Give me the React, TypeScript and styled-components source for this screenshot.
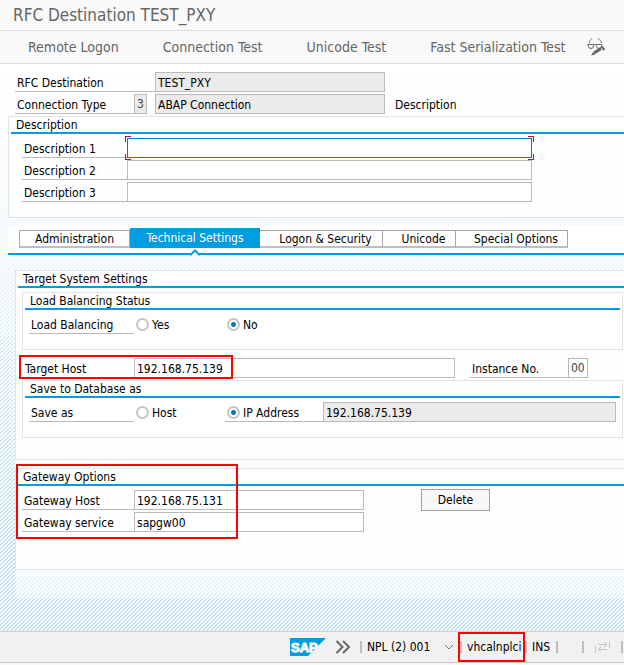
import React from "react";
import styled, { createGlobalStyle, css } from "styled-components";

const accent = "#009de0";
const line = "#bababa";

const GlobalStyle = createGlobalStyle`
  *, *::before, *::after { box-sizing: border-box; }
  body { margin: 0; }
  body, button, input { font: 12px/16px "DejaVu Sans Condensed", "Noto Sans", sans-serif; color: #000; }
  button, input { padding: 0; border-radius: 0; }
`;

const Page = styled.div`
  display: flex;
  flex-direction: column;
  min-height: 100vh;
  overflow: hidden;
`;

const TitleBar = styled.header`
  height: 31px;
  padding-left: 13px;
  background: #f9f9f9;
  border-bottom: 1px solid #dcdcdc;
`;

const Title = styled.h1`
  margin: 0;
  font-size: 17px;
  line-height: 30px;
  font-weight: 400;
  color: #666;
`;

const Toolbar = styled.nav`
  display: flex;
  align-items: center;
  gap: 44px;
  height: 33px;
  padding-left: 28px;
  background: #f9f9f9;
  border-bottom: 1px solid #dcdcdc;
`;

const ToolButton = styled.button`
  border: 0;
  background: none;
  font-size: 14px;
  white-space: nowrap;
  color: #666;
`;

const IconButton = styled.button`
  display: flex;
  border: 0;
  background: none;
  margin-left: -24px;
`;

const Stage = styled.main`
  flex: 1;
  padding: 8px 0 32px 8px;
  background:
    linear-gradient(to bottom, #fff 0, rgba(255, 255, 255, 0.7) 30%, rgba(255, 255, 255, 0) 85%),
    linear-gradient(135deg, #c3e1f1 25%, #fff 25%, #fff 50%, #c3e1f1 50%, #c3e1f1 75%, #fff 75%) 0 0 / 4px 4px;
`;

const Rows = styled.div<{ $inset?: number }>`
  display: flex;
  flex-direction: column;
  gap: 2px;
  padding-left: ${(p) => p.$inset ?? 0}px;
`;

const HeadRows = styled(Rows)`
  margin-bottom: 2px;
`;

const Row = styled.div`
  position: relative;
  display: flex;
  height: 20px;
`;

const underlined = css`
  border-bottom: 1px solid ${line};
`;

const Label = styled.label<{ $width: number; $pad?: number }>`
  flex: none;
  width: ${(p) => p.$width}px;
  padding: 3px 0 0 ${(p) => p.$pad ?? 2}px;
  white-space: nowrap;
  ${underlined}
`;

const Field = styled.input<{ $width: number; $small?: boolean }>`
  flex: 0 1 ${(p) => p.$width}px;
  min-width: 0;
  width: ${(p) => p.$width}px;
  height: 20px;
  padding: 2px 0 0 2px;
  border: 1px solid ${line};
  background: #fff;
  outline: 0;
  &:read-only { background: #ebebeb; }
  ${(p) => p.$small && css`padding: 0 0 0 2px; color: #444;`}
`;

const Gap = styled.span<{ $width: number }>`
  flex: none;
  width: ${(p) => p.$width}px;
`;

const PlainText = styled.span`
  padding-top: 3px;
`;

const FocusFrame = styled.div`
  position: relative;
  display: flex;
  ${Field} { border-color: #0079be; }
`;

const Corner = styled.i<{ $v: "top" | "bottom"; $h: "left" | "right" }>`
  position: absolute;
  width: 6px;
  height: 6px;
  ${(p) => p.$v}: -2px;
  ${(p) => p.$h}: -2px;
  border: 0 solid #e0001b;
  border-${(p) => p.$v}-width: 1px;
  border-${(p) => p.$h}-width: 1px;
`;

const Group = styled.fieldset<{ $closed?: boolean; $bottom: number }>`
  position: relative;
  min-width: 0;
  margin: 0;
  padding: 0 0 ${(p) => p.$bottom}px;
  border: 1px solid #e1e3e5;
  border-right-width: ${(p) => (p.$closed ? 1 : 0)}px;
  background: rgba(255, 255, 255, 0.72);
`;

const GroupTitle = styled.div<{ $closed?: boolean }>`
  height: 17px;
  margin: 0 ${(p) => (p.$closed ? 2 : 0)}px 4px 2px;
  padding-left: 5px;
  background: #fff;
  border-bottom: 2px solid ${accent};
`;

const TabStrip = styled.div`
  display: flex;
  height: 29px;
  margin: 8px 0 15px;
  padding: 2px 0 0 11px;
  background: #fff;
  border-bottom: 2px solid ${accent};
`;

const Tab = styled.button<{ $width: number; $active?: boolean; $shift?: number }>`
  position: relative;
  flex: 0 1 ${(p) => p.$width}px;
  height: 18px;
  margin-top: 2px;
  padding-left: ${(p) => p.$shift ?? 0}px;
  border: 1px solid #a6a6a6;
  border-left-width: 0;
  border-bottom: 2px solid #bfbfbf;
  background: #fff;
  line-height: 16px;
  white-space: nowrap;
  &:first-child { border-left-width: 1px; }
  ${(p) => p.$active && css`
    height: 20px;
    margin-top: 0;
    border: 0;
    background: ${accent};
    color: #fff;
    line-height: 20px;
  `}
`;

const Notch = styled.svg`
  position: absolute;
  left: calc(50% - 5px);
  top: 21px;
`;

const TabPage = styled.div`
  margin-left: 7px;
  padding-bottom: 22px;
  background: rgba(255, 255, 255, 0.5);
`;

const Panels = styled.div`
  display: flex;
  flex-direction: column;
  gap: 8px;
  padding-bottom: 7px;
  background: rgba(255, 255, 255, 0.5);
`;

const Inner = styled.div`
  display: flex;
  flex-direction: column;
  padding: 0 1px 0 6px;
`;

const HostRow = styled(Row)`
  margin: 8px 0 2px;
`;

const RadioLabel = styled.label<{ $width: number; $lined?: boolean }>`
  display: flex;
  flex: none;
  align-items: center;
  gap: 3px;
  width: ${(p) => p.$width}px;
  padding: 2px 0 0 2px;
  border-bottom: 1px solid ${(p) => (p.$lined ? line : "transparent")};
  white-space: nowrap;
`;

const Radio = styled.input.attrs({ type: "radio" })`
  appearance: none;
  width: 13px;
  height: 13px;
  margin: 0;
  border: 2px solid #c6c6c6;
  border-radius: 50%;
  background: #fff;
  &:checked { background: radial-gradient(circle, #0079be 0 2px, #fff 3px); }
`;

const Marker = styled.i<{ $top: number; $left: number; $width: number; $height: number }>`
  position: absolute;
  top: ${(p) => p.$top}px;
  left: ${(p) => p.$left}px;
  width: ${(p) => p.$width}px;
  height: ${(p) => p.$height}px;
  border: 2px solid #f00;
  pointer-events: none;
`;

const PushButton = styled.button`
  width: 69px;
  height: 22px;
  margin-top: -1px;
  border: 1px solid #a0a0a0;
  background: #f7f7f7;
`;

const StatusBar = styled.footer`
  display: flex;
  align-items: center;
  justify-content: flex-end;
  height: 34px;
  border-top: 1px solid #cfcfcf;
  background: linear-gradient(#f1f1f1 30px, #c4c4c4 30px, #c4c4c4 31px, #f8f8f8 31px);
  padding: 0 1px 4px 0;
  white-space: nowrap;
`;

const Separator = styled.i`
  flex: none;
  width: 2px;
  height: 12px;
  background: #c0c0c0;
`;

const StatusText = styled.span<{ $width: number }>`
  position: relative;
  flex: none;
  width: ${(p) => p.$width}px;
  padding-left: 5px;
`;

const StatusButton = styled.button<{ $width: number }>`
  display: flex;
  flex: none;
  justify-content: center;
  width: ${(p) => p.$width}px;
  border: 0;
  background: none;
`;

const GlassesPencil = () => (
  <svg width="20" height="20" viewBox="0 0 20 20" fill="none" stroke="#666">
    <path d="M3 6C3.500 4 4 2.500 6 1.500M15.500 6C15 4 14 2.500 12 1.500" strokeDasharray="3 1" />
    <path d="M1.500 7.500h6v1.500a2.500 2.500 0 0 1-5 0zM10 7.500h5.500v1.500a2.500 2.500 0 0 1-5 0M7.500 8q1.500-1 3 0" />
    <path d="M8 16L15 11.500" strokeWidth="3" />
    <path d="M5 18.500l2-3.500 2 2.500z" fill="#666" stroke="none" />
    <path d="M15.500 9.500l3 3.500" strokeWidth="2" />
  </svg>
);

const SapLogo = () => (
  <svg width="36" height="18" viewBox="0 0 36 18" role="img" aria-label="SAP">
    <path d="M0 0h36L18 18H0z" fill={accent} />
    <text x="1" y="14" fontFamily="Liberation Sans, sans-serif" fontWeight="700" fontSize="13" fill="#fff" stroke="#fff" strokeWidth="1" textRendering="geometricPrecision">SAP</text>
  </svg>
);

function TextRow({ id, label, width, value = "", labelWidth }: { id: string; label: string; width: number; value?: string; labelWidth: number }) {
  return (
    <Row>
      <Label htmlFor={id} $width={labelWidth}>{label}</Label>
      <Field id={id} $width={width} defaultValue={value} />
    </Row>
  );
}

export default function App() {
  return (
    <Page>
      <GlobalStyle />
      <TitleBar><Title>RFC Destination TEST_PXY</Title></TitleBar>
      <Toolbar>
        <ToolButton>Remote Logon</ToolButton>
        <ToolButton>Connection Test</ToolButton>
        <ToolButton>Unicode Test</ToolButton>
        <ToolButton>Fast Serialization Test</ToolButton>
        <IconButton aria-label="Display / Change"><GlassesPencil /></IconButton>
      </Toolbar>

      <Stage>
        <HeadRows $inset={7}>
          <Row>
            <Label htmlFor="dest" $width={140}>RFC Destination</Label>
            <Field id="dest" $width={230} readOnly value="TEST_PXY" />
          </Row>
          <Row>
            <Label htmlFor="ctype" $width={119}>Connection Type</Label>
            <Field id="ctype" $width={13} $small readOnly value="3" />
            <Gap $width={8} />
            <Field aria-label="Connection type name" $width={230} readOnly value="ABAP Connection" />
            <Gap $width={10} />
            <PlainText>Description</PlainText>
          </Row>
        </HeadRows>

        <Group $bottom={15} aria-label="Description">
          <GroupTitle>Description</GroupTitle>
          <Rows $inset={13}>
            <Row>
              <Label htmlFor="d1" $width={105}>Description 1</Label>
              <FocusFrame>
                <Field id="d1" $width={405} />
                <Corner $v="top" $h="left" />
                <Corner $v="top" $h="right" />
                <Corner $v="bottom" $h="left" />
                <Corner $v="bottom" $h="right" />
              </FocusFrame>
            </Row>
            <TextRow id="d2" label="Description 2" labelWidth={105} width={405} />
            <TextRow id="d3" label="Description 3" labelWidth={105} width={405} />
          </Rows>
        </Group>

        <TabStrip role="tablist">
          <Tab role="tab" $width={111}>Administration</Tab>
          <Tab role="tab" aria-selected $width={130} $active>
            Technical Settings
            <Notch width="10" height="7" viewBox="0 0 10 7">
              <path d="M0 5L5 1l5 4v2H0z" fill="#fff" />
              <path d="M0 5.500h1L5 1.500l4 4h1" fill="none" stroke={accent} strokeWidth="2" />
            </Notch>
          </Tab>
          <Tab role="tab" $width={123} $shift={9}>Logon &amp; Security</Tab>
          <Tab role="tab" $width={73} $shift={9}>Unicode</Tab>
          <Tab role="tab" $width={112} $shift={9}>Special Options</Tab>
        </TabStrip>

        <TabPage>
          <Panels>
            <Group $bottom={21} aria-label="Target System Settings">
              <GroupTitle>Target System Settings</GroupTitle>
              <Inner>
                <Group $closed $bottom={15} aria-label="Load Balancing Status">
                  <GroupTitle $closed>Load Balancing Status</GroupTitle>
                  <Rows $inset={6}>
                    <Row>
                      <Label as="span" $width={105}>Load Balancing</Label>
                      <RadioLabel $width={91}><Radio name="lb" />Yes</RadioLabel>
                      <RadioLabel $width={98}><Radio name="lb" defaultChecked />No</RadioLabel>
                    </Row>
                  </Rows>
                </Group>
                <HostRow>
                  <Label htmlFor="thost" $width={112} $pad={3}>Target Host</Label>
                  <Field id="thost" $width={321} defaultValue="192.168.75.139" />
                  <Gap $width={15} />
                  <Label htmlFor="inst" $width={98}>Instance No.</Label>
                  <Field id="inst" $width={20} $small defaultValue="00" />
                  <Marker $top={-3} $left={-3} $width={214} $height={24} />
                </HostRow>
                <Group $closed $bottom={15} aria-label="Save to Database as">
                  <GroupTitle $closed>Save to Database as</GroupTitle>
                  <Rows $inset={6}>
                    <Row>
                      <Label as="span" $width={105}>Save as</Label>
                      <RadioLabel $width={91}><Radio name="save" />Host</RadioLabel>
                      <RadioLabel $width={98} $lined><Radio name="save" defaultChecked />IP Address</RadioLabel>
                      <Field aria-label="Saved address" $width={293} readOnly value="192.168.75.139" />
                    </Row>
                  </Rows>
                </Group>
              </Inner>
            </Group>

            <Group $bottom={37} aria-label="Gateway Options">
              <GroupTitle>Gateway Options</GroupTitle>
              <Rows $inset={6}>
                <Row>
                  <Label htmlFor="ghost" $width={112}>Gateway Host</Label>
                  <Field id="ghost" $width={230} defaultValue="192.168.75.131" />
                  <Gap $width={57} />
                  <PushButton>Delete</PushButton>
                </Row>
                <TextRow id="gserv" label="Gateway service" labelWidth={112} width={230} value="sapgw00" />
              </Rows>
              <Marker $top={-5} $left={0} $width={222} $height={75} />
            </Group>
          </Panels>
        </TabPage>
      </Stage>

      <StatusBar>
        <SapLogo />
        <StatusButton $width={34} aria-label="Expand status bar">
          <svg width="16" height="14" viewBox="0 0 16 14" fill="none" stroke="#666" strokeWidth="2">
            <path d="M1.500 1L7.500 7l-6 6M8 1l6 6-6 6" />
          </svg>
        </StatusButton>
        <Separator />
        <StatusText $width={76}>NPL (2) 001</StatusText>
        <StatusButton $width={22} aria-label="System details">
          <svg width="10" height="6" viewBox="0 0 10 6" fill="none" stroke="#777"><path d="M1 1l4 4 4-4" /></svg>
        </StatusButton>
        <Separator />
        <StatusText $width={63}>
          vhcalnplci
          <Marker $top={-7} $left={-4} $width={67} $height={30} />
        </StatusText>
        <Separator />
        <StatusText $width={29}>INS</StatusText>
        <Separator />
        <Gap $width={24} />
        <Separator />
        <StatusButton $width={37} aria-label="Response time">
          <svg width="15" height="12" viewBox="0 0 15 12" fill="none" stroke="#c6c6c6">
            <path d="M3 3.500h9M9 1l3 2.500L9 6M14.500 0v7M12 8.500H3M6 6L3 8.500 6 11M.5 5v7" />
          </svg>
        </StatusButton>
        <Separator />
      </StatusBar>
    </Page>
  );
}
